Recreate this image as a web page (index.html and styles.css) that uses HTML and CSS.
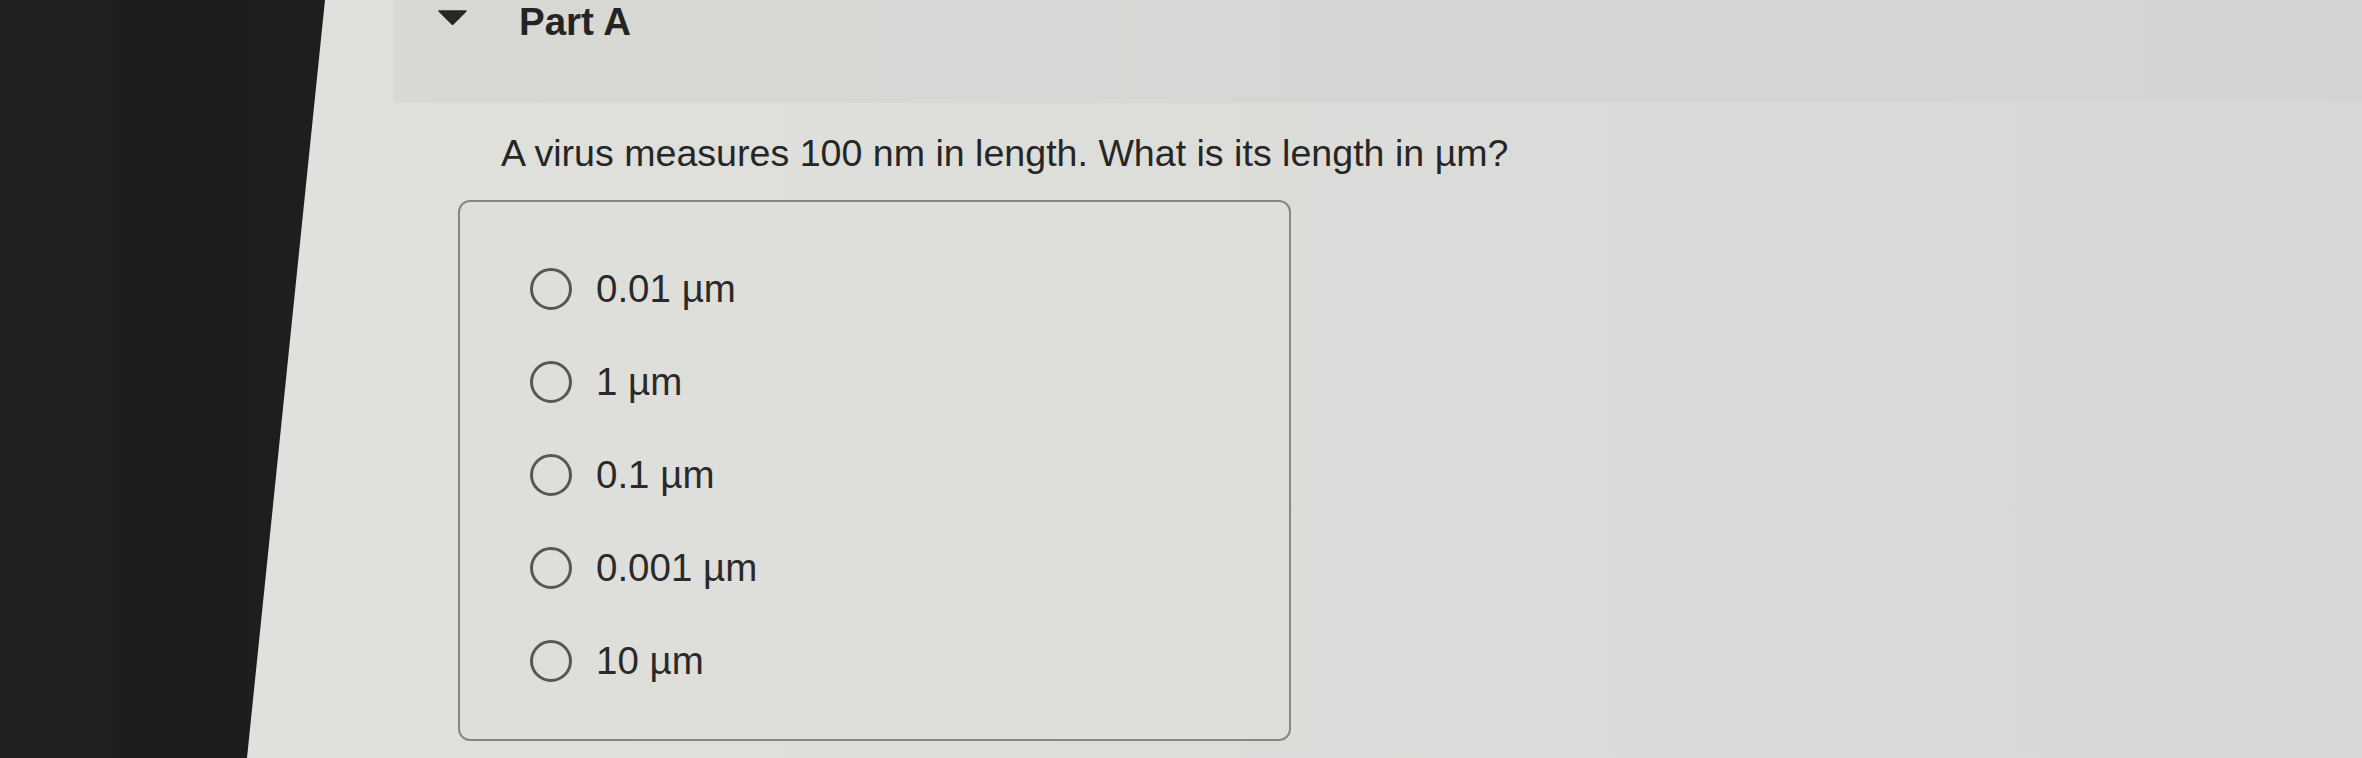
FILE: index.html
```html
<!DOCTYPE html>
<html lang="en">
<head>
<meta charset="utf-8">
<title>Part A</title>
<link rel="stylesheet" href="styles.css">
</head>
<body>
<div class="bezel"></div>
<main class="screen">
  <header class="part-header">
    <svg class="caret" width="29" height="15" viewBox="0 0 29 15" aria-hidden="true"><polygon points="1,1 28,1 14.5,14.5" fill="#272727" stroke="#272727" stroke-width="1.5" stroke-linejoin="round"/></svg>
    <h2 class="part-title">Part A</h2>
  </header>
  <section class="question">
    <p class="prompt">A virus measures 100 nm in length. What is its length in µm?</p>
    <div class="choices">
      <label class="choice"><span class="radio"></span><span class="choice-text">0.01 µm</span></label>
      <label class="choice"><span class="radio"></span><span class="choice-text">1 µm</span></label>
      <label class="choice"><span class="radio"></span><span class="choice-text">0.1 µm</span></label>
      <label class="choice"><span class="radio"></span><span class="choice-text">0.001 µm</span></label>
      <label class="choice"><span class="radio"></span><span class="choice-text">10 µm</span></label>
    </div>
  </section>
</main>
</body>
</html>
```
FILE: styles.css
```css
html, body {
  margin: 0;
  padding: 0;
}

body {
  display: flex;
  width: 2362px;
  height: 758px;
  overflow: hidden;
  background: #1d1e20;
  font-family: "Liberation Sans", Arial, Helvetica, sans-serif;
  color: #262626;
}

.bezel {
  flex: 0 0 247px;
  background: linear-gradient(to right, #202123 0, #1f2022 105px, #1b1c1e 125px, #1c1d1f 100%);
}

.screen {
  flex: 1;
  display: flex;
  flex-direction: column;
  clip-path: polygon(78px 0, 100% 0, 100% 100%, 0 100%);
  background: linear-gradient(to right, #e0e1dd 0, #dddeda 40%, #d6d8d7 100%);
}

.part-header {
  display: flex;
  align-items: flex-start;
  margin-left: 146px;
  height: 103px;
  padding-left: 45px;
  background: linear-gradient(to right, #d8d9d5, #d4d5d3 100%);
}

.caret {
  flex: none;
  margin-top: 10px;
}

.part-title {
  margin: 0 0 0 52px;
  font-size: 38.5px;
  font-weight: bold;
  line-height: 43px;
  color: #242424;
}

.prompt {
  margin: 28px 0 0 254px;
  font-size: 37.6px;
  line-height: 44px;
}

.choices {
  display: flex;
  flex-direction: column;
  box-sizing: border-box;
  width: 833px;
  height: 541px;
  margin: 25px 0 0 211px;
  padding: 40px 0 0 70px;
  border: 2.5px solid #868785;
  border-radius: 12px;
  background: #dedfdb;
}

.choice {
  display: flex;
  align-items: center;
  gap: 24px;
  height: 93px;
}

.radio {
  flex: none;
  box-sizing: border-box;
  width: 42px;
  height: 42px;
  border: 3.5px solid #575757;
  border-radius: 50%;
}

.choice-text {
  font-size: 38.5px;
  color: #2a2a2a;
}
```
